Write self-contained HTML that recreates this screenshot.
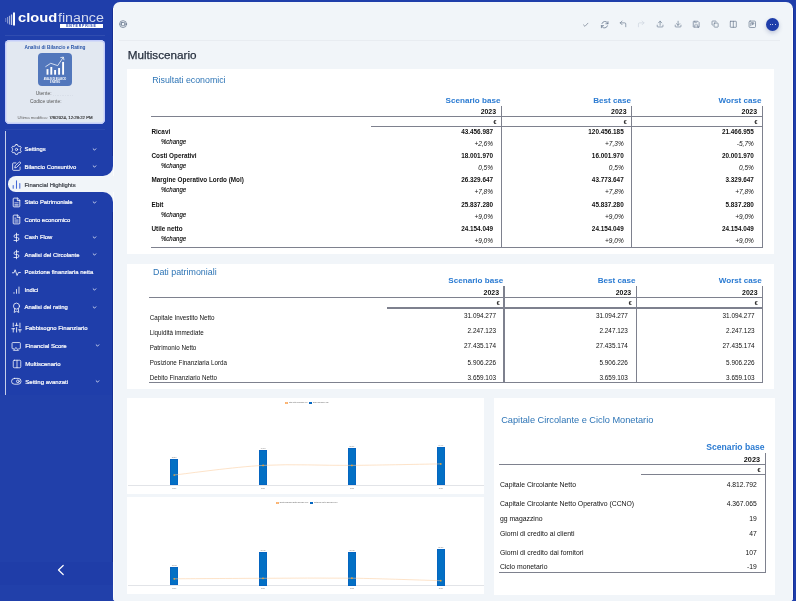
<!DOCTYPE html>
<html lang="it"><head><meta charset="utf-8"><title>Multiscenario</title>
<style>
html,body{margin:0;padding:0}
body{width:796px;height:601px;overflow:hidden;position:relative;background:#1F3EAA;font-family:"Liberation Sans",sans-serif;}
.t{position:absolute;white-space:nowrap;color:#111}
.r{position:absolute}
.b{font-weight:bold}
.i{font-style:italic}
svg{position:absolute;overflow:visible}
.ic{fill:none;stroke:#fff;stroke-width:1.6;stroke-linecap:round;stroke-linejoin:round}
.tc{fill:none;stroke:#64748b;stroke-width:1.6;stroke-linecap:round;stroke-linejoin:round}
#wrap{position:absolute;left:0;top:0;width:796px;height:601px;will-change:transform}
</style></head><body><div id="wrap">

<div class="r" style="left:112.90px;top:1.60px;width:680.00px;height:602.40px;background:#F1F5F9;border-radius:7px;"></div>
<div class="r" style="left:0.00px;top:394.80px;width:112.50px;height:206.20px;background:#2140AA;"></div>
<div class="r" style="left:111.90px;top:8.00px;width:1.00px;height:576.60px;background:rgba(10,20,110,0.35);"></div>
<div class="r" style="left:112.90px;top:8.00px;width:0.70px;height:592.00px;background:rgba(255,255,255,0.7);"></div>
<div class="r" style="left:792.20px;top:8.00px;width:0.70px;height:592.00px;background:rgba(255,255,255,0.7);"></div>
<div class="r" style="left:792.90px;top:8.00px;width:1.00px;height:590.00px;background:rgba(10,30,130,0.4);"></div>
<svg style="left:4px;top:11px" width="14" height="16" viewBox="0 0 14 16"><rect x="1.2" y="7" width="1" height="4" fill="#fff" opacity=".35"/><rect x="3" y="6" width="1.1" height="6.5" fill="#fff" opacity=".45"/><rect x="4.9" y="4.8" width="1.2" height="8.7" fill="#fff" opacity=".6"/><rect x="6.9" y="3.5" width="1.3" height="10.5" fill="#fff" opacity=".75"/><rect x="9" y="1.5" width="2" height="13" fill="#fff"/></svg>
<div class="t b" style="top:10px;font-size:13.7px;line-height:15px;height:15px;left:17.80px;color:#fff;transform:scaleX(1.075);transform-origin:0 50%;">cloud</div>
<div class="t " style="top:10px;font-size:13.7px;line-height:15px;height:15px;left:57.80px;color:rgba(255,255,255,0.8);transform:scaleX(1.04);transform-origin:0 50%;">finance</div>
<div class="r" style="left:60.00px;top:23.60px;width:43.00px;height:4.60px;background:#fff;"></div>
<div class="t b" style="top:24px;font-size:3.5px;line-height:4px;height:4px;left:-68.60px;width:300px;text-align:center;color:#1F3EAA;letter-spacing:0.8px;">ENTERPRISE</div>
<div class="r" style="left:5.00px;top:34.50px;width:99.50px;height:1.00px;background:rgba(255,255,255,0.08);"></div>
<div class="r" style="left:4.90px;top:40.20px;width:99.90px;height:84.20px;background:#E2E8F1;border-radius:4.5px;box-shadow:inset 0 0 0 1.4px #C4CDFA;"></div>
<div class="t b" style="top:45px;font-size:4.75px;line-height:5px;height:5px;left:-95.00px;width:300px;text-align:center;color:#2B56A8;">Analisi di Bilancio e Rating</div>
<div class="r" style="left:37.90px;top:53.00px;width:33.90px;height:33.30px;background:#5277BC;border-radius:4px;"></div>
<svg style="left:44px;top:56px" width="22" height="20" viewBox="0 0 22 20"><g fill="#fff"><rect x="2.55" y="13.1" width="1.9" height="5.6"/><rect x="6.35" y="11" width="1.9" height="7.7"/><rect x="10.15" y="14" width="1.9" height="4.7"/><rect x="14.15" y="12" width="1.9" height="6.7"/><rect x="18.15" y="5.9" width="1.9" height="12.8"/></g><path d="M1.7 10.6 L6.7 7.3 L13.7 9.6 L19.2 1.4 M16.7 1.6 L19.4 1.1 L19.9 3.8" fill="none" stroke="#fff" stroke-width="0.75" stroke-linecap="round" stroke-linejoin="round"/></svg>
<div class="t b" style="top:78px;font-size:2.55px;line-height:3px;height:3px;left:-95.20px;width:300px;text-align:center;color:#fff;transform:scaleX(0.85);">ANALISI DI BILANCIO</div>
<div class="t b" style="top:81px;font-size:2.55px;line-height:3px;height:3px;left:-95.20px;width:300px;text-align:center;color:#fff;transform:scaleX(0.85);">E RATING</div>
<div class="t " style="top:91px;font-size:4.9px;line-height:5px;height:5px;left:-248.50px;width:300px;text-align:right;color:#555;">Utente:</div>
<div class="t " style="top:93px;font-size:3px;line-height:4px;height:4px;left:53.30px;color:#a9afbc;">. . . . . . . . . . . .</div>
<div class="t " style="top:99px;font-size:4.9px;line-height:5px;height:5px;left:-238.50px;width:300px;text-align:right;color:#555;">Codice utente:</div>
<div class="t" style="left:0;width:110px;text-align:center;top:115px;font-size:4.3px;line-height:5px;color:#666">Ultima modifica: <span style="color:#222;-webkit-text-stroke:0.12px #222">7/8/2024, 12:29:22 PM</span></div>
<div class="r" style="left:5.00px;top:128.90px;width:99.50px;height:1.00px;background:rgba(255,255,255,0.05);"></div>
<div class="r" style="left:5.15px;top:130.50px;width:0.90px;height:264.50px;background:rgba(255,255,255,0.75);"></div>
<div class="r" style="left:8.00px;top:176.40px;width:112.00px;height:15.60px;background:#F1F5F9;border-radius:7.8px 0 0 7.8px;"></div>
<div class="r" style="left:103.00px;top:166.40px;width:10.00px;height:10.00px;background:#F1F5F9;"></div>
<div class="r" style="left:93.00px;top:156.40px;width:20.00px;height:20.00px;background:#1F3EAA;border-radius:0 0 10px 0;"></div>
<div class="r" style="left:103.00px;top:192.00px;width:10.00px;height:10.00px;background:#F1F5F9;"></div>
<div class="r" style="left:93.00px;top:192.00px;width:20.00px;height:20.00px;background:#1F3EAA;border-radius:0 10px 0 0;"></div>
<svg style="left:10.50px;top:143.70px" width="11" height="11" viewBox="0 0 20 20"><g class="ic" style="stroke:#fff;stroke-width:1.45"><path d="M10.0 1.0L10.8 1.0L11.6 1.1L12.1 2.3L12.4 3.4L13.0 3.7L13.5 3.9L14.0 4.3L14.5 4.6L15.7 4.3L16.9 4.2L17.4 4.8L17.8 5.5L18.2 6.2L18.5 6.9L17.7 7.9L16.9 8.8L17.0 9.4L17.0 10.0L17.0 10.6L16.9 11.2L17.7 12.1L18.5 13.1L18.2 13.8L17.8 14.5L17.4 15.2L16.9 15.8L15.7 15.7L14.5 15.4L14.0 15.7L13.5 16.1L13.0 16.3L12.4 16.6L12.1 17.7L11.6 18.9L10.8 19.0L10.0 19.0L9.2 19.0L8.4 18.9L7.9 17.7L7.6 16.6L7.0 16.3L6.5 16.1L6.0 15.7L5.5 15.4L4.3 15.7L3.1 15.8L2.6 15.2L2.2 14.5L1.8 13.8L1.5 13.1L2.3 12.1L3.1 11.2L3.0 10.6L3.0 10.0L3.0 9.4L3.1 8.8L2.3 7.9L1.5 6.9L1.8 6.2L2.2 5.5L2.6 4.8L3.1 4.2L4.3 4.3L5.5 4.6L6.0 4.3L6.5 3.9L7.0 3.7L7.6 3.4L7.9 2.3L8.4 1.1L9.2 1.0z" stroke-width="1.7"/><circle cx="10" cy="10" r="2.1"/></g></svg>
<div class="t " style="top:146px;font-size:5.9px;line-height:6px;height:6px;left:24.50px;color:#fff;-webkit-text-stroke:0.2px #fff;">Settings</div>
<svg style="left:92.10px;top:146.70px" width="5" height="5" viewBox="0 0 10 10"><path d="M2.300 3.600l2.700 2.700 2.700-2.700" fill="none" stroke="#fff" stroke-width="1.700" stroke-linecap="round" stroke-linejoin="round" opacity=".9"/></svg>
<svg style="left:10.50px;top:161.30px" width="11" height="11" viewBox="0 0 20 20"><g class="ic" style="stroke:#fff;stroke-width:1.45"><path d="M9 3.5H4.5a1.5 1.5 0 0 0-1.500 1.500v10.500a1.500 1.500 0 0 0 1.500 1.500h10.500a1.500 1.500 0 0 0 1.500-1.500V11"/><path d="M14.500 2.300a1.700 1.700 0 0 1 2.500 2.500L10 11.800l-3.200.800.800-3.200z"/></g></svg>
<div class="t " style="top:164px;font-size:5.9px;line-height:6px;height:6px;left:24.50px;color:#fff;-webkit-text-stroke:0.2px #fff;">Bilancio Consuntivo</div>
<svg style="left:92.10px;top:164.30px" width="5" height="5" viewBox="0 0 10 10"><path d="M2.300 3.600l2.700 2.700 2.700-2.700" fill="none" stroke="#fff" stroke-width="1.700" stroke-linecap="round" stroke-linejoin="round" opacity=".9"/></svg>
<svg style="left:10.50px;top:179.00px" width="11" height="11" viewBox="0 0 20 20"><g class="ic" style="stroke:#4468D6;stroke-width:1.9"><path d="M4 17v-5M10 17V3M16 17V8"/></g></svg>
<div class="t " style="top:182px;font-size:5.9px;line-height:6px;height:6px;left:24.50px;color:#3a3f47;-webkit-text-stroke:0.2px #3a3f47;">Financial Highlights</div>
<svg style="left:10.50px;top:196.50px" width="11" height="11" viewBox="0 0 20 20"><g class="ic" style="stroke:#fff;stroke-width:1.45"><path d="M11.500 2H5.500A1.500 1.500 0 0 0 4 3.500v13A1.500 1.500 0 0 0 5.500 18h9a1.500 1.500 0 0 0 1.500-1.500V6.500z"/><path d="M11.500 2v4.500H16"/><path d="M7 10.500h6M7 13.500h6M7 16h6" stroke-width="1.200"/></g></svg>
<div class="t " style="top:199px;font-size:5.9px;line-height:6px;height:6px;left:24.50px;color:#fff;-webkit-text-stroke:0.2px #fff;">Stato Patrimoniale</div>
<svg style="left:92.10px;top:199.50px" width="5" height="5" viewBox="0 0 10 10"><path d="M2.300 3.600l2.700 2.700 2.700-2.700" fill="none" stroke="#fff" stroke-width="1.700" stroke-linecap="round" stroke-linejoin="round" opacity=".9"/></svg>
<svg style="left:10.50px;top:214.20px" width="11" height="11" viewBox="0 0 20 20"><g class="ic" style="stroke:#fff;stroke-width:1.45"><path d="M11.500 2H5.500A1.500 1.500 0 0 0 4 3.500v13A1.500 1.500 0 0 0 5.500 18h9a1.500 1.500 0 0 0 1.500-1.500V6.500z"/><path d="M11.500 2v4.500H16"/><path d="M7 11h6M7 14.500h6M7 7.500h2"/></g></svg>
<div class="t " style="top:217px;font-size:5.9px;line-height:6px;height:6px;left:24.50px;color:#fff;-webkit-text-stroke:0.2px #fff;">Conto economico</div>
<svg style="left:10.50px;top:231.50px" width="11" height="11" viewBox="0 0 20 20"><g class="ic" style="stroke:#fff;stroke-width:1.45"><path d="M10 2.200v15.600M14 5H8.200a2.600 2.600 0 0 0 0 5.200h3.600a2.600 2.600 0 0 1 0 5.200H5.500"/></g></svg>
<div class="t " style="top:234px;font-size:5.9px;line-height:6px;height:6px;left:24.50px;color:#fff;-webkit-text-stroke:0.2px #fff;">Cash Flow</div>
<svg style="left:92.10px;top:234.50px" width="5" height="5" viewBox="0 0 10 10"><path d="M2.300 3.600l2.700 2.700 2.700-2.700" fill="none" stroke="#fff" stroke-width="1.700" stroke-linecap="round" stroke-linejoin="round" opacity=".9"/></svg>
<svg style="left:10.50px;top:249.20px" width="11" height="11" viewBox="0 0 20 20"><g class="ic" style="stroke:#fff;stroke-width:1.45"><path d="M10 2.200v15.600M14 5H8.200a2.600 2.600 0 0 0 0 5.200h3.600a2.600 2.600 0 0 1 0 5.200H5.500"/></g></svg>
<div class="t " style="top:252px;font-size:5.9px;line-height:6px;height:6px;left:24.50px;color:#fff;-webkit-text-stroke:0.2px #fff;">Analisi del Circolante</div>
<svg style="left:92.10px;top:252.20px" width="5" height="5" viewBox="0 0 10 10"><path d="M2.300 3.600l2.700 2.700 2.700-2.700" fill="none" stroke="#fff" stroke-width="1.700" stroke-linecap="round" stroke-linejoin="round" opacity=".9"/></svg>
<svg style="left:10.50px;top:266.50px" width="11" height="11" viewBox="0 0 20 20"><g class="ic" style="stroke:#fff;stroke-width:1.45"><path d="M2.500 10.500h3l2-5.500 3.500 10.500 2.500-5.500h3.500"/></g></svg>
<div class="t " style="top:269px;font-size:5.9px;line-height:6px;height:6px;left:24.50px;color:#fff;-webkit-text-stroke:0.2px #fff;">Posizione finanziaria netta</div>
<svg style="left:10.50px;top:284.20px" width="11" height="11" viewBox="0 0 20 20"><g class="ic" style="stroke:#fff;stroke-width:1.45"><path d="M5.500 17v-1.500M10 17V10M14.500 17V5.500"/></g></svg>
<div class="t " style="top:287px;font-size:5.9px;line-height:6px;height:6px;left:24.50px;color:#fff;-webkit-text-stroke:0.2px #fff;">Indici</div>
<svg style="left:92.10px;top:287.20px" width="5" height="5" viewBox="0 0 10 10"><path d="M2.300 3.600l2.700 2.700 2.700-2.700" fill="none" stroke="#fff" stroke-width="1.700" stroke-linecap="round" stroke-linejoin="round" opacity=".9"/></svg>
<svg style="left:10.50px;top:301.70px" width="11" height="11" viewBox="0 0 20 20"><g class="ic" style="stroke:#fff;stroke-width:1.45"><circle cx="10" cy="7.500" r="5.500"/><path d="M6.800 12.200L5.800 19l4.200-2.300 4.200 2.300-1-6.800"/></g></svg>
<div class="t " style="top:304px;font-size:5.9px;line-height:6px;height:6px;left:24.50px;color:#fff;-webkit-text-stroke:0.2px #fff;">Analisi del rating</div>
<svg style="left:92.10px;top:304.70px" width="5" height="5" viewBox="0 0 10 10"><path d="M2.300 3.600l2.700 2.700 2.700-2.700" fill="none" stroke="#fff" stroke-width="1.700" stroke-linecap="round" stroke-linejoin="round" opacity=".9"/></svg>
<svg style="left:10.90px;top:322.10px" width="11.2" height="11.2" viewBox="0 0 20 20"><g class="ic" style="stroke:#fff;stroke-width:1.5"><path d="M4 18v-6M4 8V2M10 18v-8M10 6V2M16 18v-4M16 10V2M1.500 12h5M7.500 6h5M13.500 14h5"/></g></svg>
<div class="t " style="top:325px;font-size:6.0px;line-height:6px;height:6px;left:25.30px;color:#fff;-webkit-text-stroke:0.2px #fff;">Fabbisogno Finanziario</div>
<svg style="left:11.30px;top:340.50px" width="10.4" height="10.4" viewBox="0 0 20 20"><g class="ic" style="stroke:#fff;stroke-width:1.5"><path d="M5 15H3.500A1.500 1.500 0 0 1 2 13.500v-9A1.500 1.500 0 0 1 3.500 3h13A1.500 1.500 0 0 1 18 4.500v9a1.500 1.500 0 0 1-1.500 1.500H15"/><path d="M10 13l4.500 5h-9z"/></g></svg>
<div class="t " style="top:343px;font-size:6.0px;line-height:6px;height:6px;left:25.30px;color:#fff;-webkit-text-stroke:0.2px #fff;">Financial Score</div>
<svg style="left:95.20px;top:343.20px" width="5" height="5" viewBox="0 0 10 10"><path d="M2.300 3.600l2.700 2.700 2.700-2.700" fill="none" stroke="#fff" stroke-width="1.700" stroke-linecap="round" stroke-linejoin="round" opacity=".9"/></svg>
<svg style="left:11.50px;top:358.70px" width="10" height="10" viewBox="0 0 20 20"><g class="ic" style="stroke:#fff;stroke-width:1.5"><rect x="2.500" y="2.500" width="15" height="15" rx="2"/><path d="M10 2.500v15"/></g></svg>
<div class="t " style="top:361px;font-size:6.0px;line-height:6px;height:6px;left:25.30px;color:#fff;-webkit-text-stroke:0.2px #fff;">Multiscenario</div>
<svg style="left:11.20px;top:376.40px" width="10.6" height="10.6" viewBox="0 0 20 20"><g class="ic" style="stroke:#fff;stroke-width:1.5"><rect x="1" y="4.500" width="18" height="11" rx="5.500"/><circle cx="13" cy="10" r="2.600"/></g></svg>
<div class="t " style="top:379px;font-size:6.0px;line-height:6px;height:6px;left:25.30px;color:#fff;-webkit-text-stroke:0.2px #fff;">Setting avanzati</div>
<svg style="left:95.20px;top:379.20px" width="5" height="5" viewBox="0 0 10 10"><path d="M2.300 3.600l2.700 2.700 2.700-2.700" fill="none" stroke="#fff" stroke-width="1.700" stroke-linecap="round" stroke-linejoin="round" opacity=".9"/></svg>
<div class="r" style="left:0.00px;top:561.80px;width:112.90px;height:22.90px;background:#1F3DA8;"></div>
<svg style="left:56px;top:564.6px" width="10" height="10" viewBox="0 0 10 10"><path d="M7.200 0.500L2.500 5l4.700 4.500" fill="none" stroke="#fff" stroke-width="1.200" stroke-linecap="round" stroke-linejoin="round"/></svg>
<div class="r" style="left:119.00px;top:39.50px;width:661.00px;height:1.00px;background:#E8ECF1;"></div>
<svg style="left:118.9px;top:20.3px" width="8.2" height="8.2" viewBox="0 0 20 20"><g class="tc" style="stroke-width:1.800"><circle cx="10" cy="10" r="8.500"/><rect x="6" y="6" width="8" height="8" rx="1"/><path d="M2 10h4M14 10h4"/></g></svg>
<svg style="left:582.20px;top:20.70px" width="7.4" height="7.4" viewBox="0 0 20 20"><g class="tc" style="stroke:#566377"><path d="M4 10.500l4 4 8-8.500"/></g></svg>
<svg style="left:599.64px;top:19.70px" width="9.4" height="9.4" viewBox="0 0 20 20"><g class="tc" style="stroke:#64748b"><path d="M17 3.500v4.500h-4.500M3 16.500V12h4.500"/><path d="M4.200 7.500a6.500 6.500 0 0 1 11.500-1.500L17 8M3 12l1.300 2a6.500 6.500 0 0 0 11.500-1.500"/></g></svg>
<svg style="left:618.68px;top:20.30px" width="8.2" height="8.2" viewBox="0 0 20 20"><g class="tc" style="stroke:#64748b"><path d="M7.500 11.500L3 7l4.500-4.500"/><path d="M3 7h11a2.500 2.500 0 0 1 2.500 2.500V16.500"/></g></svg>
<svg style="left:637.12px;top:20.30px" width="8.2" height="8.2" viewBox="0 0 20 20"><g class="tc" style="stroke:#cbd3dd"><path d="M12.500 11.500L17 7l-4.500-4.500"/><path d="M17 7H6a2.500 2.500 0 0 0-2.500 2.500V16.500"/></g></svg>
<svg style="left:655.56px;top:20.30px" width="8.2" height="8.2" viewBox="0 0 20 20"><g class="tc" style="stroke:#64748b"><path d="M3 12.500v3A1.500 1.500 0 0 0 4.500 17h11a1.500 1.500 0 0 0 1.500-1.500v-3M6 7l4-4 4 4M10 3v10"/></g></svg>
<svg style="left:674.00px;top:20.30px" width="8.2" height="8.2" viewBox="0 0 20 20"><g class="tc" style="stroke:#64748b"><path d="M3 12.500v3A1.500 1.500 0 0 0 4.500 17h11a1.500 1.500 0 0 0 1.500-1.500v-3M6 9l4 4 4-4M10 13V3"/></g></svg>
<svg style="left:692.34px;top:20.20px" width="8.4" height="8.4" viewBox="0 0 20 20"><g class="tc" style="stroke:#64748b"><path d="M16 17H4a1 1 0 0 1-1-1V4a1 1 0 0 1 1-1h10l3 3v10a1 1 0 0 1-1 1z"/><path d="M13.500 17v-5.500h-7V17M6.500 3v3.500h5" stroke-width="1.300"/></g></svg>
<svg style="left:710.88px;top:20.30px" width="8.2" height="8.2" viewBox="0 0 20 20"><g class="tc" style="stroke:#64748b"><rect x="7.500" y="7.500" width="10" height="10" rx="1.500"/><path d="M4.500 12.500H4A1.500 1.500 0 0 1 2.500 11V4A1.500 1.500 0 0 1 4 2.500h7A1.500 1.500 0 0 1 12.500 4v.500"/></g></svg>
<svg style="left:729.12px;top:20.10px" width="8.6" height="8.6" viewBox="0 0 20 20"><g class="tc" style="stroke:#64748b"><rect x="3" y="3" width="14" height="14" rx="1"/><path d="M10 3v14"/></g></svg>
<svg style="left:747.56px;top:20.10px" width="8.6" height="8.6" viewBox="0 0 20 20"><g class="tc" style="stroke:#64748b"><rect x="2.500" y="2.500" width="15" height="15" rx="2.500"/><path d="M6.500 13.500v-7h3.500v4.500M10 6.500h3.500v3h-3.500" stroke-width="1.500"/></g></svg>
<div class="r" style="left:766.30px;top:17.90px;width:13.00px;height:13.00px;background:#1F3EAA;border-radius:50%;box-shadow:0 2px 4px rgba(30,50,120,.25);"></div>
<div class="r" style="left:769.60px;top:23.70px;width:1.40px;height:1.40px;background:#fff;border-radius:50%;"></div>
<div class="r" style="left:772.10px;top:23.70px;width:1.40px;height:1.40px;background:#fff;border-radius:50%;"></div>
<div class="r" style="left:774.60px;top:23.70px;width:1.40px;height:1.40px;background:#fff;border-radius:50%;"></div>
<div class="t " style="top:48px;font-size:11.7px;line-height:13px;height:13px;left:127.70px;color:#27303f;-webkit-text-stroke:0.25px #27303f;">Multiscenario</div>
<div class="r" style="left:126.70px;top:68.80px;width:647.30px;height:185.20px;background:#fff;"></div>
<div class="t " style="top:75px;font-size:8.8px;line-height:10px;height:10px;left:152.20px;color:#2E75B6;">Risultati economici</div>
<div class="t b" style="top:96px;font-size:8.1px;line-height:9px;height:9px;left:200.50px;width:300px;text-align:right;color:#2B7BD2;">Scenario base</div>
<div class="t b" style="top:108px;font-size:6.95px;line-height:7px;height:7px;left:196.10px;width:300px;text-align:right;">2023</div>
<div class="t b" style="top:119px;font-size:5.3px;line-height:6px;height:6px;left:196.40px;width:300px;text-align:right;">€</div>
<div class="r" style="left:501.15px;top:105.50px;width:1.10px;height:142.50px;background:#7e818e;"></div>
<div class="t b" style="top:96px;font-size:8.1px;line-height:9px;height:9px;left:331.00px;width:300px;text-align:right;color:#2B7BD2;">Best case</div>
<div class="t b" style="top:108px;font-size:6.95px;line-height:7px;height:7px;left:326.50px;width:300px;text-align:right;">2023</div>
<div class="t b" style="top:119px;font-size:5.3px;line-height:6px;height:6px;left:326.70px;width:300px;text-align:right;">€</div>
<div class="r" style="left:631.05px;top:105.50px;width:1.10px;height:142.50px;background:#7e818e;"></div>
<div class="t b" style="top:96px;font-size:8.1px;line-height:9px;height:9px;left:461.50px;width:300px;text-align:right;color:#2B7BD2;">Worst case</div>
<div class="t b" style="top:108px;font-size:6.95px;line-height:7px;height:7px;left:457.00px;width:300px;text-align:right;">2023</div>
<div class="t b" style="top:119px;font-size:5.3px;line-height:6px;height:6px;left:457.40px;width:300px;text-align:right;">€</div>
<div class="r" style="left:761.75px;top:105.50px;width:1.10px;height:142.50px;background:#7e818e;"></div>
<div class="r" style="left:151.20px;top:116.05px;width:611.80px;height:1.10px;background:#7e818e;"></div>
<div class="r" style="left:370.60px;top:125.65px;width:392.40px;height:1.10px;background:#7e818e;"></div>
<div class="r" style="left:151.20px;top:247.15px;width:611.80px;height:1.10px;background:#7e818e;"></div>
<div class="t b" style="top:128px;font-size:6.35px;line-height:7px;height:7px;left:151.50px;">Ricavi</div>
<div class="t i" style="top:138px;font-size:6.7px;line-height:7px;height:7px;left:160.80px;color:#000;-webkit-text-stroke:0.12px #000;transform:scaleX(0.9);transform-origin:0 50%;">%change</div>
<div class="t b" style="top:128px;font-size:6.37px;line-height:7px;height:7px;left:193.00px;width:300px;text-align:right;">43.456.987</div>
<div class="t i" style="top:140px;font-size:6.5px;line-height:7px;height:7px;left:193.00px;width:300px;text-align:right;color:#111;">+2,6%</div>
<div class="t b" style="top:128px;font-size:6.37px;line-height:7px;height:7px;left:323.70px;width:300px;text-align:right;">120.456.185</div>
<div class="t i" style="top:140px;font-size:6.5px;line-height:7px;height:7px;left:323.70px;width:300px;text-align:right;color:#111;">+7,3%</div>
<div class="t b" style="top:128px;font-size:6.37px;line-height:7px;height:7px;left:453.80px;width:300px;text-align:right;">21.466.955</div>
<div class="t i" style="top:140px;font-size:6.5px;line-height:7px;height:7px;left:453.80px;width:300px;text-align:right;color:#111;">-5,7%</div>
<div class="t b" style="top:152px;font-size:6.35px;line-height:7px;height:7px;left:151.50px;">Costi Operativi</div>
<div class="t i" style="top:162px;font-size:6.7px;line-height:7px;height:7px;left:160.80px;color:#000;-webkit-text-stroke:0.12px #000;transform:scaleX(0.9);transform-origin:0 50%;">%change</div>
<div class="t b" style="top:152px;font-size:6.37px;line-height:7px;height:7px;left:193.00px;width:300px;text-align:right;">18.001.970</div>
<div class="t i" style="top:164px;font-size:6.5px;line-height:7px;height:7px;left:193.00px;width:300px;text-align:right;color:#111;">0,5%</div>
<div class="t b" style="top:152px;font-size:6.37px;line-height:7px;height:7px;left:323.70px;width:300px;text-align:right;">16.001.970</div>
<div class="t i" style="top:164px;font-size:6.5px;line-height:7px;height:7px;left:323.70px;width:300px;text-align:right;color:#111;">0,5%</div>
<div class="t b" style="top:152px;font-size:6.37px;line-height:7px;height:7px;left:453.80px;width:300px;text-align:right;">20.001.970</div>
<div class="t i" style="top:164px;font-size:6.5px;line-height:7px;height:7px;left:453.80px;width:300px;text-align:right;color:#111;">0,5%</div>
<div class="t b" style="top:176px;font-size:6.35px;line-height:7px;height:7px;left:151.50px;">Margine Operativo Lordo (Mol)</div>
<div class="t i" style="top:186px;font-size:6.7px;line-height:7px;height:7px;left:160.80px;color:#000;-webkit-text-stroke:0.12px #000;transform:scaleX(0.9);transform-origin:0 50%;">%change</div>
<div class="t b" style="top:176px;font-size:6.37px;line-height:7px;height:7px;left:193.00px;width:300px;text-align:right;">26.329.647</div>
<div class="t i" style="top:188px;font-size:6.5px;line-height:7px;height:7px;left:193.00px;width:300px;text-align:right;color:#111;">+7,8%</div>
<div class="t b" style="top:176px;font-size:6.37px;line-height:7px;height:7px;left:323.70px;width:300px;text-align:right;">43.773.647</div>
<div class="t i" style="top:188px;font-size:6.5px;line-height:7px;height:7px;left:323.70px;width:300px;text-align:right;color:#111;">+7,8%</div>
<div class="t b" style="top:176px;font-size:6.37px;line-height:7px;height:7px;left:453.80px;width:300px;text-align:right;">3.329.647</div>
<div class="t i" style="top:188px;font-size:6.5px;line-height:7px;height:7px;left:453.80px;width:300px;text-align:right;color:#111;">+7,8%</div>
<div class="t b" style="top:201px;font-size:6.35px;line-height:7px;height:7px;left:151.50px;">Ebit</div>
<div class="t i" style="top:211px;font-size:6.7px;line-height:7px;height:7px;left:160.80px;color:#000;-webkit-text-stroke:0.12px #000;transform:scaleX(0.9);transform-origin:0 50%;">%change</div>
<div class="t b" style="top:201px;font-size:6.37px;line-height:7px;height:7px;left:193.00px;width:300px;text-align:right;">25.837.280</div>
<div class="t i" style="top:213px;font-size:6.5px;line-height:7px;height:7px;left:193.00px;width:300px;text-align:right;color:#111;">+9,0%</div>
<div class="t b" style="top:201px;font-size:6.37px;line-height:7px;height:7px;left:323.70px;width:300px;text-align:right;">45.837.280</div>
<div class="t i" style="top:213px;font-size:6.5px;line-height:7px;height:7px;left:323.70px;width:300px;text-align:right;color:#111;">+9,0%</div>
<div class="t b" style="top:201px;font-size:6.37px;line-height:7px;height:7px;left:453.80px;width:300px;text-align:right;">5.837.280</div>
<div class="t i" style="top:213px;font-size:6.5px;line-height:7px;height:7px;left:453.80px;width:300px;text-align:right;color:#111;">+9,0%</div>
<div class="t b" style="top:225px;font-size:6.35px;line-height:7px;height:7px;left:151.50px;">Utile netto</div>
<div class="t i" style="top:235px;font-size:6.7px;line-height:7px;height:7px;left:160.80px;color:#000;-webkit-text-stroke:0.12px #000;transform:scaleX(0.9);transform-origin:0 50%;">%change</div>
<div class="t b" style="top:225px;font-size:6.37px;line-height:7px;height:7px;left:193.00px;width:300px;text-align:right;">24.154.049</div>
<div class="t i" style="top:237px;font-size:6.5px;line-height:7px;height:7px;left:193.00px;width:300px;text-align:right;color:#111;">+9,0%</div>
<div class="t b" style="top:225px;font-size:6.37px;line-height:7px;height:7px;left:323.70px;width:300px;text-align:right;">24.154.049</div>
<div class="t i" style="top:237px;font-size:6.5px;line-height:7px;height:7px;left:323.70px;width:300px;text-align:right;color:#111;">+9,0%</div>
<div class="t b" style="top:225px;font-size:6.37px;line-height:7px;height:7px;left:453.80px;width:300px;text-align:right;">24.154.049</div>
<div class="t i" style="top:237px;font-size:6.5px;line-height:7px;height:7px;left:453.80px;width:300px;text-align:right;color:#111;">+9,0%</div>
<div class="r" style="left:126.70px;top:263.80px;width:647.30px;height:125.20px;background:#fff;"></div>
<div class="t " style="top:267px;font-size:8.9px;line-height:10px;height:10px;left:153.00px;color:#2E75B6;">Dati patrimoniali</div>
<div class="t b" style="top:276px;font-size:8.1px;line-height:9px;height:9px;left:203.20px;width:300px;text-align:right;color:#2B7BD2;">Scenario base</div>
<div class="t b" style="top:289px;font-size:6.95px;line-height:7px;height:7px;left:199.00px;width:300px;text-align:right;">2023</div>
<div class="t b" style="top:300px;font-size:5.3px;line-height:6px;height:6px;left:199.60px;width:300px;text-align:right;">€</div>
<div class="r" style="left:503.45px;top:286.40px;width:1.10px;height:96.10px;background:#7e818e;"></div>
<div class="t b" style="top:276px;font-size:8.1px;line-height:9px;height:9px;left:335.50px;width:300px;text-align:right;color:#2B7BD2;">Best case</div>
<div class="t b" style="top:289px;font-size:6.95px;line-height:7px;height:7px;left:331.20px;width:300px;text-align:right;">2023</div>
<div class="t b" style="top:300px;font-size:5.3px;line-height:6px;height:6px;left:331.70px;width:300px;text-align:right;">€</div>
<div class="r" style="left:635.95px;top:286.40px;width:1.10px;height:96.10px;background:#7e818e;"></div>
<div class="t b" style="top:276px;font-size:8.1px;line-height:9px;height:9px;left:461.80px;width:300px;text-align:right;color:#2B7BD2;">Worst case</div>
<div class="t b" style="top:289px;font-size:6.95px;line-height:7px;height:7px;left:457.50px;width:300px;text-align:right;">2023</div>
<div class="t b" style="top:300px;font-size:5.3px;line-height:6px;height:6px;left:457.70px;width:300px;text-align:right;">€</div>
<div class="r" style="left:761.95px;top:286.40px;width:1.10px;height:96.10px;background:#7e818e;"></div>
<div class="r" style="left:149.20px;top:296.85px;width:613.80px;height:1.10px;background:#7e818e;"></div>
<div class="r" style="left:386.80px;top:307.45px;width:376.20px;height:1.10px;background:#7e818e;"></div>
<div class="r" style="left:149.20px;top:381.75px;width:613.80px;height:1.10px;background:#7e818e;"></div>
<div class="t " style="top:314px;font-size:6.28px;line-height:7px;height:7px;left:149.70px;">Capitale Investito Netto</div>
<div class="t " style="top:312px;font-size:6.4px;line-height:7px;height:7px;left:196.00px;width:300px;text-align:right;">31.094.277</div>
<div class="t " style="top:312px;font-size:6.4px;line-height:7px;height:7px;left:327.90px;width:300px;text-align:right;">31.094.277</div>
<div class="t " style="top:312px;font-size:6.4px;line-height:7px;height:7px;left:454.50px;width:300px;text-align:right;">31.094.277</div>
<div class="t " style="top:329px;font-size:6.28px;line-height:7px;height:7px;left:149.70px;">Liquidità immediate</div>
<div class="t " style="top:327px;font-size:6.4px;line-height:7px;height:7px;left:196.00px;width:300px;text-align:right;">2.247.123</div>
<div class="t " style="top:327px;font-size:6.4px;line-height:7px;height:7px;left:327.90px;width:300px;text-align:right;">2.247.123</div>
<div class="t " style="top:327px;font-size:6.4px;line-height:7px;height:7px;left:454.50px;width:300px;text-align:right;">2.247.123</div>
<div class="t " style="top:344px;font-size:6.28px;line-height:7px;height:7px;left:149.70px;">Patrimonio Netto</div>
<div class="t " style="top:342px;font-size:6.4px;line-height:7px;height:7px;left:196.00px;width:300px;text-align:right;">27.435.174</div>
<div class="t " style="top:342px;font-size:6.4px;line-height:7px;height:7px;left:327.90px;width:300px;text-align:right;">27.435.174</div>
<div class="t " style="top:342px;font-size:6.4px;line-height:7px;height:7px;left:454.50px;width:300px;text-align:right;">27.435.174</div>
<div class="t " style="top:359px;font-size:6.28px;line-height:7px;height:7px;left:149.70px;">Posizione Finanziaria Lorda</div>
<div class="t " style="top:359px;font-size:6.4px;line-height:7px;height:7px;left:196.00px;width:300px;text-align:right;">5.906.226</div>
<div class="t " style="top:359px;font-size:6.4px;line-height:7px;height:7px;left:327.90px;width:300px;text-align:right;">5.906.226</div>
<div class="t " style="top:359px;font-size:6.4px;line-height:7px;height:7px;left:454.50px;width:300px;text-align:right;">5.906.226</div>
<div class="t " style="top:374px;font-size:6.28px;line-height:7px;height:7px;left:149.70px;">Debito Finanziario Netto</div>
<div class="t " style="top:374px;font-size:6.4px;line-height:7px;height:7px;left:196.00px;width:300px;text-align:right;">3.659.103</div>
<div class="t " style="top:374px;font-size:6.4px;line-height:7px;height:7px;left:327.90px;width:300px;text-align:right;">3.659.103</div>
<div class="t " style="top:374px;font-size:6.4px;line-height:7px;height:7px;left:454.50px;width:300px;text-align:right;">3.659.103</div>
<div class="r" style="left:127.00px;top:398.30px;width:357.20px;height:95.80px;background:#fff;"></div>
<div class="r" style="left:128.00px;top:484.95px;width:356.20px;height:0.90px;background:#e2e4e8;"></div>
<div class="r" style="left:170.00px;top:458.70px;width:8.40px;height:26.40px;background:#0370C4;box-shadow:inset 0 0 0 0.7px #0862BF;"></div>
<div class="r" style="left:258.90px;top:449.70px;width:8.40px;height:35.40px;background:#0370C4;box-shadow:inset 0 0 0 0.7px #0862BF;"></div>
<div class="r" style="left:347.70px;top:447.80px;width:8.40px;height:37.30px;background:#0370C4;box-shadow:inset 0 0 0 0.7px #0862BF;"></div>
<div class="r" style="left:436.65px;top:446.80px;width:8.40px;height:38.30px;background:#0370C4;box-shadow:inset 0 0 0 0.7px #0862BF;"></div>
<svg style="left:0;top:0" width="796" height="601"><path d="M174.2 475 C189.0 473.4 233.5 467.0 263.1 465.4 C292.7 463.8 322.3 465.6 351.9 465.4 C381.5 465.1 426.0 464.1 440.8 463.9" fill="none" stroke="#FCCB9C" stroke-width="0.55"/><circle cx="174.2" cy="475" r="0.85" fill="#F5A030"/><circle cx="263.1" cy="465.4" r="0.85" fill="#F5A030"/><circle cx="351.9" cy="465.4" r="0.85" fill="#F5A030"/><circle cx="440.8" cy="463.9" r="0.85" fill="#F5A030"/></svg>
<div class="t " style="top:487px;font-size:1.8px;line-height:2px;height:2px;left:24.20px;width:300px;text-align:center;color:#888;">2020</div>
<div class="t " style="top:456px;font-size:1.8px;line-height:2px;height:2px;left:24.20px;width:300px;text-align:center;color:#777;">33,2%</div>
<div class="t " style="top:487px;font-size:1.8px;line-height:2px;height:2px;left:113.10px;width:300px;text-align:center;color:#888;">2021</div>
<div class="t " style="top:447px;font-size:1.8px;line-height:2px;height:2px;left:113.10px;width:300px;text-align:center;color:#777;">40,7%</div>
<div class="t " style="top:487px;font-size:1.8px;line-height:2px;height:2px;left:201.90px;width:300px;text-align:center;color:#888;">2022</div>
<div class="t " style="top:445px;font-size:1.8px;line-height:2px;height:2px;left:201.90px;width:300px;text-align:center;color:#777;">42,5%</div>
<div class="t " style="top:487px;font-size:1.8px;line-height:2px;height:2px;left:290.85px;width:300px;text-align:center;color:#888;">2023</div>
<div class="t " style="top:444px;font-size:1.8px;line-height:2px;height:2px;left:290.85px;width:300px;text-align:center;color:#777;">43,4%</div>
<div class="r" style="left:284.90px;top:401.50px;width:3.10px;height:2.20px;background:#FCD0A6;box-shadow:inset 0 0 0 0.4px #F9A65A;"></div>
<div class="t" style="left:288.90px;top:401.10px;font-size:1.66px;line-height:3px;height:3px;color:#555">Utile netto (Scenario) (%)</div>
<div class="r" style="left:309.00px;top:401.50px;width:3.10px;height:2.20px;background:#0370C4;box-shadow:inset 0 0 0 0.4px #0862BF;"></div>
<div class="t" style="left:313.00px;top:401.10px;font-size:1.58px;line-height:3px;height:3px;color:#555">Ricavi (Scenario) (M€)</div>
<div class="r" style="left:127.00px;top:497.20px;width:357.20px;height:96.60px;background:#fff;"></div>
<div class="r" style="left:128.00px;top:585.35px;width:356.20px;height:0.90px;background:#e2e4e8;"></div>
<div class="r" style="left:170.00px;top:566.80px;width:8.40px;height:18.70px;background:#0370C4;box-shadow:inset 0 0 0 0.7px #0862BF;"></div>
<div class="r" style="left:258.90px;top:552.00px;width:8.40px;height:33.50px;background:#0370C4;box-shadow:inset 0 0 0 0.7px #0862BF;"></div>
<div class="r" style="left:347.70px;top:552.00px;width:8.40px;height:33.50px;background:#0370C4;box-shadow:inset 0 0 0 0.7px #0862BF;"></div>
<div class="r" style="left:436.65px;top:549.00px;width:8.40px;height:36.50px;background:#0370C4;box-shadow:inset 0 0 0 0.7px #0862BF;"></div>
<svg style="left:0;top:0" width="796" height="601"><path d="M174.2 578.8 C189.0 578.7 233.4 578.4 263 578.3 C292.6 578.2 322.3 577.8 351.9 578.2 C381.5 578.6 426.0 580.3 440.8 580.7" fill="none" stroke="#FCCB9C" stroke-width="0.55"/><circle cx="174.2" cy="578.8" r="0.85" fill="#F5A030"/><circle cx="263" cy="578.3" r="0.85" fill="#F5A030"/><circle cx="351.9" cy="578.2" r="0.85" fill="#F5A030"/><circle cx="440.8" cy="580.7" r="0.85" fill="#F5A030"/></svg>
<div class="t " style="top:587px;font-size:1.8px;line-height:2px;height:2px;left:24.20px;width:300px;text-align:center;color:#888;">2020</div>
<div class="t " style="top:564px;font-size:1.8px;line-height:2px;height:2px;left:24.20px;width:300px;text-align:center;color:#777;">15,3m</div>
<div class="t " style="top:587px;font-size:1.8px;line-height:2px;height:2px;left:113.10px;width:300px;text-align:center;color:#888;">2021</div>
<div class="t " style="top:549px;font-size:1.8px;line-height:2px;height:2px;left:113.10px;width:300px;text-align:center;color:#777;">31,4m</div>
<div class="t " style="top:587px;font-size:1.8px;line-height:2px;height:2px;left:201.90px;width:300px;text-align:center;color:#888;">2022</div>
<div class="t " style="top:549px;font-size:1.8px;line-height:2px;height:2px;left:201.90px;width:300px;text-align:center;color:#777;">31,4m</div>
<div class="t " style="top:587px;font-size:1.8px;line-height:2px;height:2px;left:290.85px;width:300px;text-align:center;color:#888;">2023</div>
<div class="t " style="top:546px;font-size:1.8px;line-height:2px;height:2px;left:290.85px;width:300px;text-align:center;color:#777;">35,1m</div>
<div class="r" style="left:275.90px;top:501.80px;width:3.10px;height:2.20px;background:#FCD0A6;box-shadow:inset 0 0 0 0.4px #F9A65A;"></div>
<div class="t" style="left:279.70px;top:501.40px;font-size:1.6px;line-height:3px;height:3px;color:#555">Debito Finanziario Netto (Scenario) (M€)</div>
<div class="r" style="left:310.20px;top:501.80px;width:3.10px;height:2.20px;background:#0370C4;box-shadow:inset 0 0 0 0.4px #0862BF;"></div>
<div class="t" style="left:314.00px;top:501.40px;font-size:1.62px;line-height:3px;height:3px;color:#555">Patrimonio Netto (Scenario) (M€)</div>
<div class="r" style="left:493.90px;top:398.00px;width:280.70px;height:196.60px;background:#fff;"></div>
<div class="t " style="top:415px;font-size:9.22px;line-height:10px;height:10px;left:501.20px;color:#2E75B6;">Capitale Circolante e Ciclo Monetario</div>
<div class="t b" style="top:442px;font-size:8.6px;line-height:10px;height:10px;left:464.60px;width:300px;text-align:right;color:#2B7BD2;">Scenario base</div>
<div class="t b" style="top:455px;font-size:7.28px;line-height:9px;height:9px;left:460.00px;width:300px;text-align:right;">2023</div>
<div class="t b" style="top:467px;font-size:5.6px;line-height:6px;height:6px;left:460.50px;width:300px;text-align:right;">€</div>
<div class="r" style="left:765.15px;top:453.30px;width:1.10px;height:119.30px;background:#7e818e;"></div>
<div class="r" style="left:499.00px;top:463.65px;width:266.80px;height:1.10px;background:#7e818e;"></div>
<div class="r" style="left:640.70px;top:474.25px;width:125.10px;height:1.10px;background:#7e818e;"></div>
<div class="r" style="left:499.00px;top:571.65px;width:266.80px;height:1.10px;background:#7e818e;"></div>
<div class="t " style="top:481px;font-size:6.85px;line-height:7px;height:7px;left:499.90px;">Capitale Circolante Netto</div>
<div class="t " style="top:481px;font-size:6.77px;line-height:7px;height:7px;left:456.80px;width:300px;text-align:right;">4.812.792</div>
<div class="t " style="top:500px;font-size:6.85px;line-height:7px;height:7px;left:499.90px;">Capitale Circolante Netto Operativo (CCNO)</div>
<div class="t " style="top:500px;font-size:6.77px;line-height:7px;height:7px;left:456.80px;width:300px;text-align:right;">4.367.065</div>
<div class="t " style="top:515px;font-size:6.85px;line-height:7px;height:7px;left:499.90px;">gg magazzino</div>
<div class="t " style="top:515px;font-size:6.77px;line-height:7px;height:7px;left:456.80px;width:300px;text-align:right;">19</div>
<div class="t " style="top:530px;font-size:6.85px;line-height:7px;height:7px;left:499.90px;">Giorni di credito ai clienti</div>
<div class="t " style="top:530px;font-size:6.77px;line-height:7px;height:7px;left:456.80px;width:300px;text-align:right;">47</div>
<div class="t " style="top:549px;font-size:6.85px;line-height:7px;height:7px;left:499.90px;">Giorni di credito dai fornitori</div>
<div class="t " style="top:549px;font-size:6.77px;line-height:7px;height:7px;left:456.80px;width:300px;text-align:right;">107</div>
<div class="t " style="top:563px;font-size:6.85px;line-height:7px;height:7px;left:499.90px;">Ciclo monetario</div>
<div class="t " style="top:563px;font-size:6.77px;line-height:7px;height:7px;left:456.80px;width:300px;text-align:right;">-19</div>
</div></body></html>
